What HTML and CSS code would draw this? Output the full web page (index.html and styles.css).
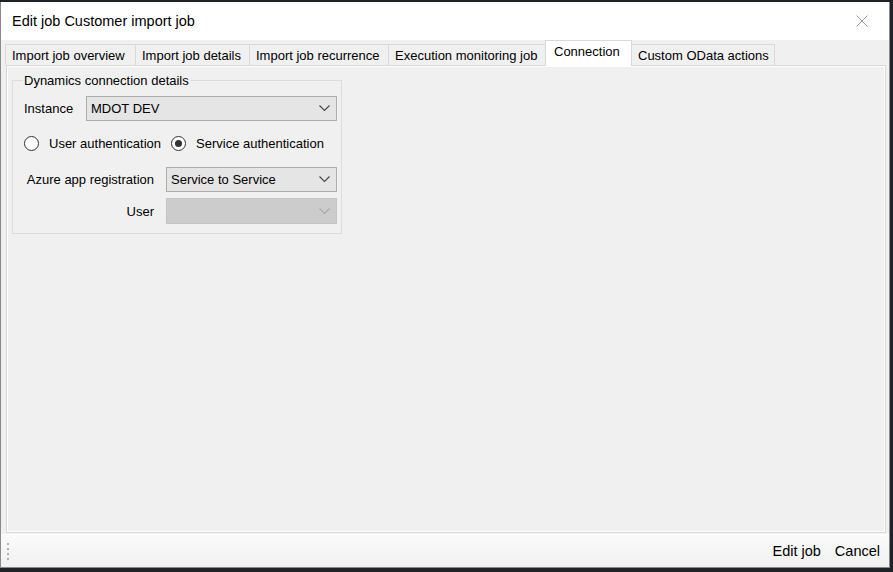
FILE: index.html
```html
<!DOCTYPE html>
<html>
<head>
<meta charset="utf-8">
<link rel="stylesheet" href="styles.css">
</head>
<body>
<div class="screen">
  <div class="window">
    <div class="titlebar">
      <span class="title">Edit job Customer import job</span>
      <svg class="close" width="12" height="12" viewBox="0 0 12 12"><path d="M0.5 0.5 L11.5 11.5 M11.5 0.5 L0.5 11.5" stroke="#a0a0a0" stroke-width="1" fill="none"/></svg>
    </div>
    <div class="client">
      <div class="tabs">
        <div class="tab w1">Import job overview</div>
        <div class="tab w2">Import job details</div>
        <div class="tab w3">Import job recurrence</div>
        <div class="tab w4">Execution monitoring job</div>
        <div class="tab active w5">Connection</div>
        <div class="tab w6">Custom OData actions</div>
      </div>
      <div class="page">
        <fieldset class="group">
          <legend>Dynamics connection details</legend>
          <div class="row instance">
            <span class="lbl">Instance</span>
            <div class="combo wide"><span>MDOT DEV</span><svg class="chev" width="11" height="7" viewBox="0 0 11 7"><path d="M0.5 0.5 L5.5 5.5 L10.5 0.5" stroke="#444" stroke-width="1.1" fill="none"/></svg></div>
          </div>
          <div class="row radios">
            <label class="radio"><span class="dot"></span>User authentication</label>
            <label class="radio on"><span class="dot"></span>Service authentication</label>
          </div>
          <div class="row form">
            <span class="lbl r">Azure app registration</span>
            <div class="combo"><span>Service to Service</span><svg class="chev" width="11" height="7" viewBox="0 0 11 7"><path d="M0.5 0.5 L5.5 5.5 L10.5 0.5" stroke="#444" stroke-width="1.1" fill="none"/></svg></div>
          </div>
          <div class="row form user">
            <span class="lbl r">User</span>
            <div class="combo disabled"><span></span><svg class="chev" width="11" height="7" viewBox="0 0 11 7"><path d="M0.5 0.5 L5.5 5.5 L10.5 0.5" stroke="#a8a8a8" stroke-width="1.1" fill="none"/></svg></div>
          </div>
        </fieldset>
      </div>
      <div class="status">
        <div class="grip"><i></i><i></i><i></i><i></i></div>
        <div class="actions">
          <span class="btn">Edit job</span>
          <span class="btn">Cancel</span>
        </div>
      </div>
    </div>
  </div>
</div>
</body>
</html>
```
FILE: styles.css
```css
html, body {
  margin: 0;
  padding: 0;
  background: #1f2226;
  width: 893px;
  height: 572px;
  overflow: hidden;
}
.screen {
  padding-top: 2px;
  height: 570px;
}
.window {
  width: 888px;
  height: 565px;
  border: 1px solid #8a8a8a;
  border-top: none;
  background: #f0f0f0;
  display: flex;
  flex-direction: column;
  font-family: "Liberation Sans", Arial, sans-serif;
  color: #000;
}
.titlebar {
  height: 38px;
  flex: none;
  background: #fff;
  display: flex;
  align-items: center;
  justify-content: space-between;
  padding: 0 21px 0 11px;
}
.title {
  font-size: 14.5px;
}
.close { display: block; }
.client {
  flex: 1;
  display: flex;
  flex-direction: column;
  padding: 0 3px 0 4px;
}
.tabs {
  display: flex;
  height: 26px;
  align-items: flex-end;
  font-size: 13px;
  position: relative;
  z-index: 1;
  margin-bottom: -1px;
}
.tab {
  flex: none;
  height: 21px;
  box-sizing: border-box;
  border: 1px solid #d9d9d9;
  border-bottom: none;
  border-right: none;
  background: #f0f0f0;
  padding: 3px 0 0 6px;
  white-space: nowrap;
  margin-bottom: 1px;
}
.tab.w6 { border-right: 1px solid #d9d9d9; }
.tab.active {
  height: 26px;
  background: #fff;
  margin-bottom: 0;
  padding-top: 3px;
  padding-left: 8px;
  border: 1px solid #d9d9d9;
  border-bottom: none;
}
.tab.active + .tab { border-left: none; }
.w1 { width: 130px; }
.w2 { width: 114px; }
.w3 { width: 139px; }
.w4 { width: 157px; }
.w5 { width: 87px; }
.w6 { width: 143px; }
.page {
  flex: 1;
  border: 1px solid #d9d9d9;
  box-shadow: inset 0 0 0 1px #fff;
  background: #f0f0f0;
  padding: 7px 0 0 5px;
  margin-left: 1px;
}
.group {
  width: 330px;
  height: 161px;
  box-sizing: border-box;
  margin: 0;
  border: 1px solid #dcdcdc;
  padding: 0 0 0 11px;
  font-size: 13px;
}
.group legend {
  padding: 0 1px;
  margin-left: -1px;
  font-size: 13px;
}
.row {
  display: flex;
  align-items: center;
}
.instance { margin-top: 8px; }
.lbl { flex: none; }
.instance .lbl { width: 62px; }
.combo {
  height: 25px;
  box-sizing: border-box;
  width: 171px;
  border: 1px solid #adadad;
  background: #e5e5e5;
  display: flex;
  align-items: center;
  justify-content: space-between;
  padding: 0 6px 0 4px;
  font-size: 13px;
}
.combo.wide { width: 251px; }
.combo.disabled {
  background: #cccccc;
  border-color: #c4c4c4;
  height: 26px;
}
.chev { display: block; }
.radios {
  margin-top: 11px;
  height: 22px;
}
.radio {
  display: flex;
  align-items: center;
  margin-right: 10px;
}
.dot {
  width: 13px;
  height: 13px;
  border: 1px solid #333;
  border-radius: 50%;
  background: #fff;
  margin-right: 10px;
  position: relative;
}
.radio.on .dot::after {
  content: "";
  position: absolute;
  left: 3px;
  top: 3px;
  width: 7px;
  height: 7px;
  border-radius: 50%;
  background: #333;
}
.form { margin-top: 13px; }
.form .lbl.r {
  width: 138px;
  text-align: right;
  margin-right: 12px;
  margin-left: -8px;
}
.form.user { margin-top: 6px; }
.status {
  height: 32px;
  flex: none;
  margin: 1px -3px 0 -4px;
  border-top: 1px solid #fff;
  background: linear-gradient(#fafafa, #f1f1f1);
  display: flex;
  align-items: center;
  justify-content: space-between;
  font-size: 14.5px;
}
.grip {
  display: flex;
  flex-direction: column;
  gap: 3px;
  padding-left: 6px;
}
.grip i {
  display: block;
  width: 2px;
  height: 2px;
  background: #b0b0b0;
}
.actions {
  display: flex;
  gap: 14px;
  padding-right: 9px;
}
```
